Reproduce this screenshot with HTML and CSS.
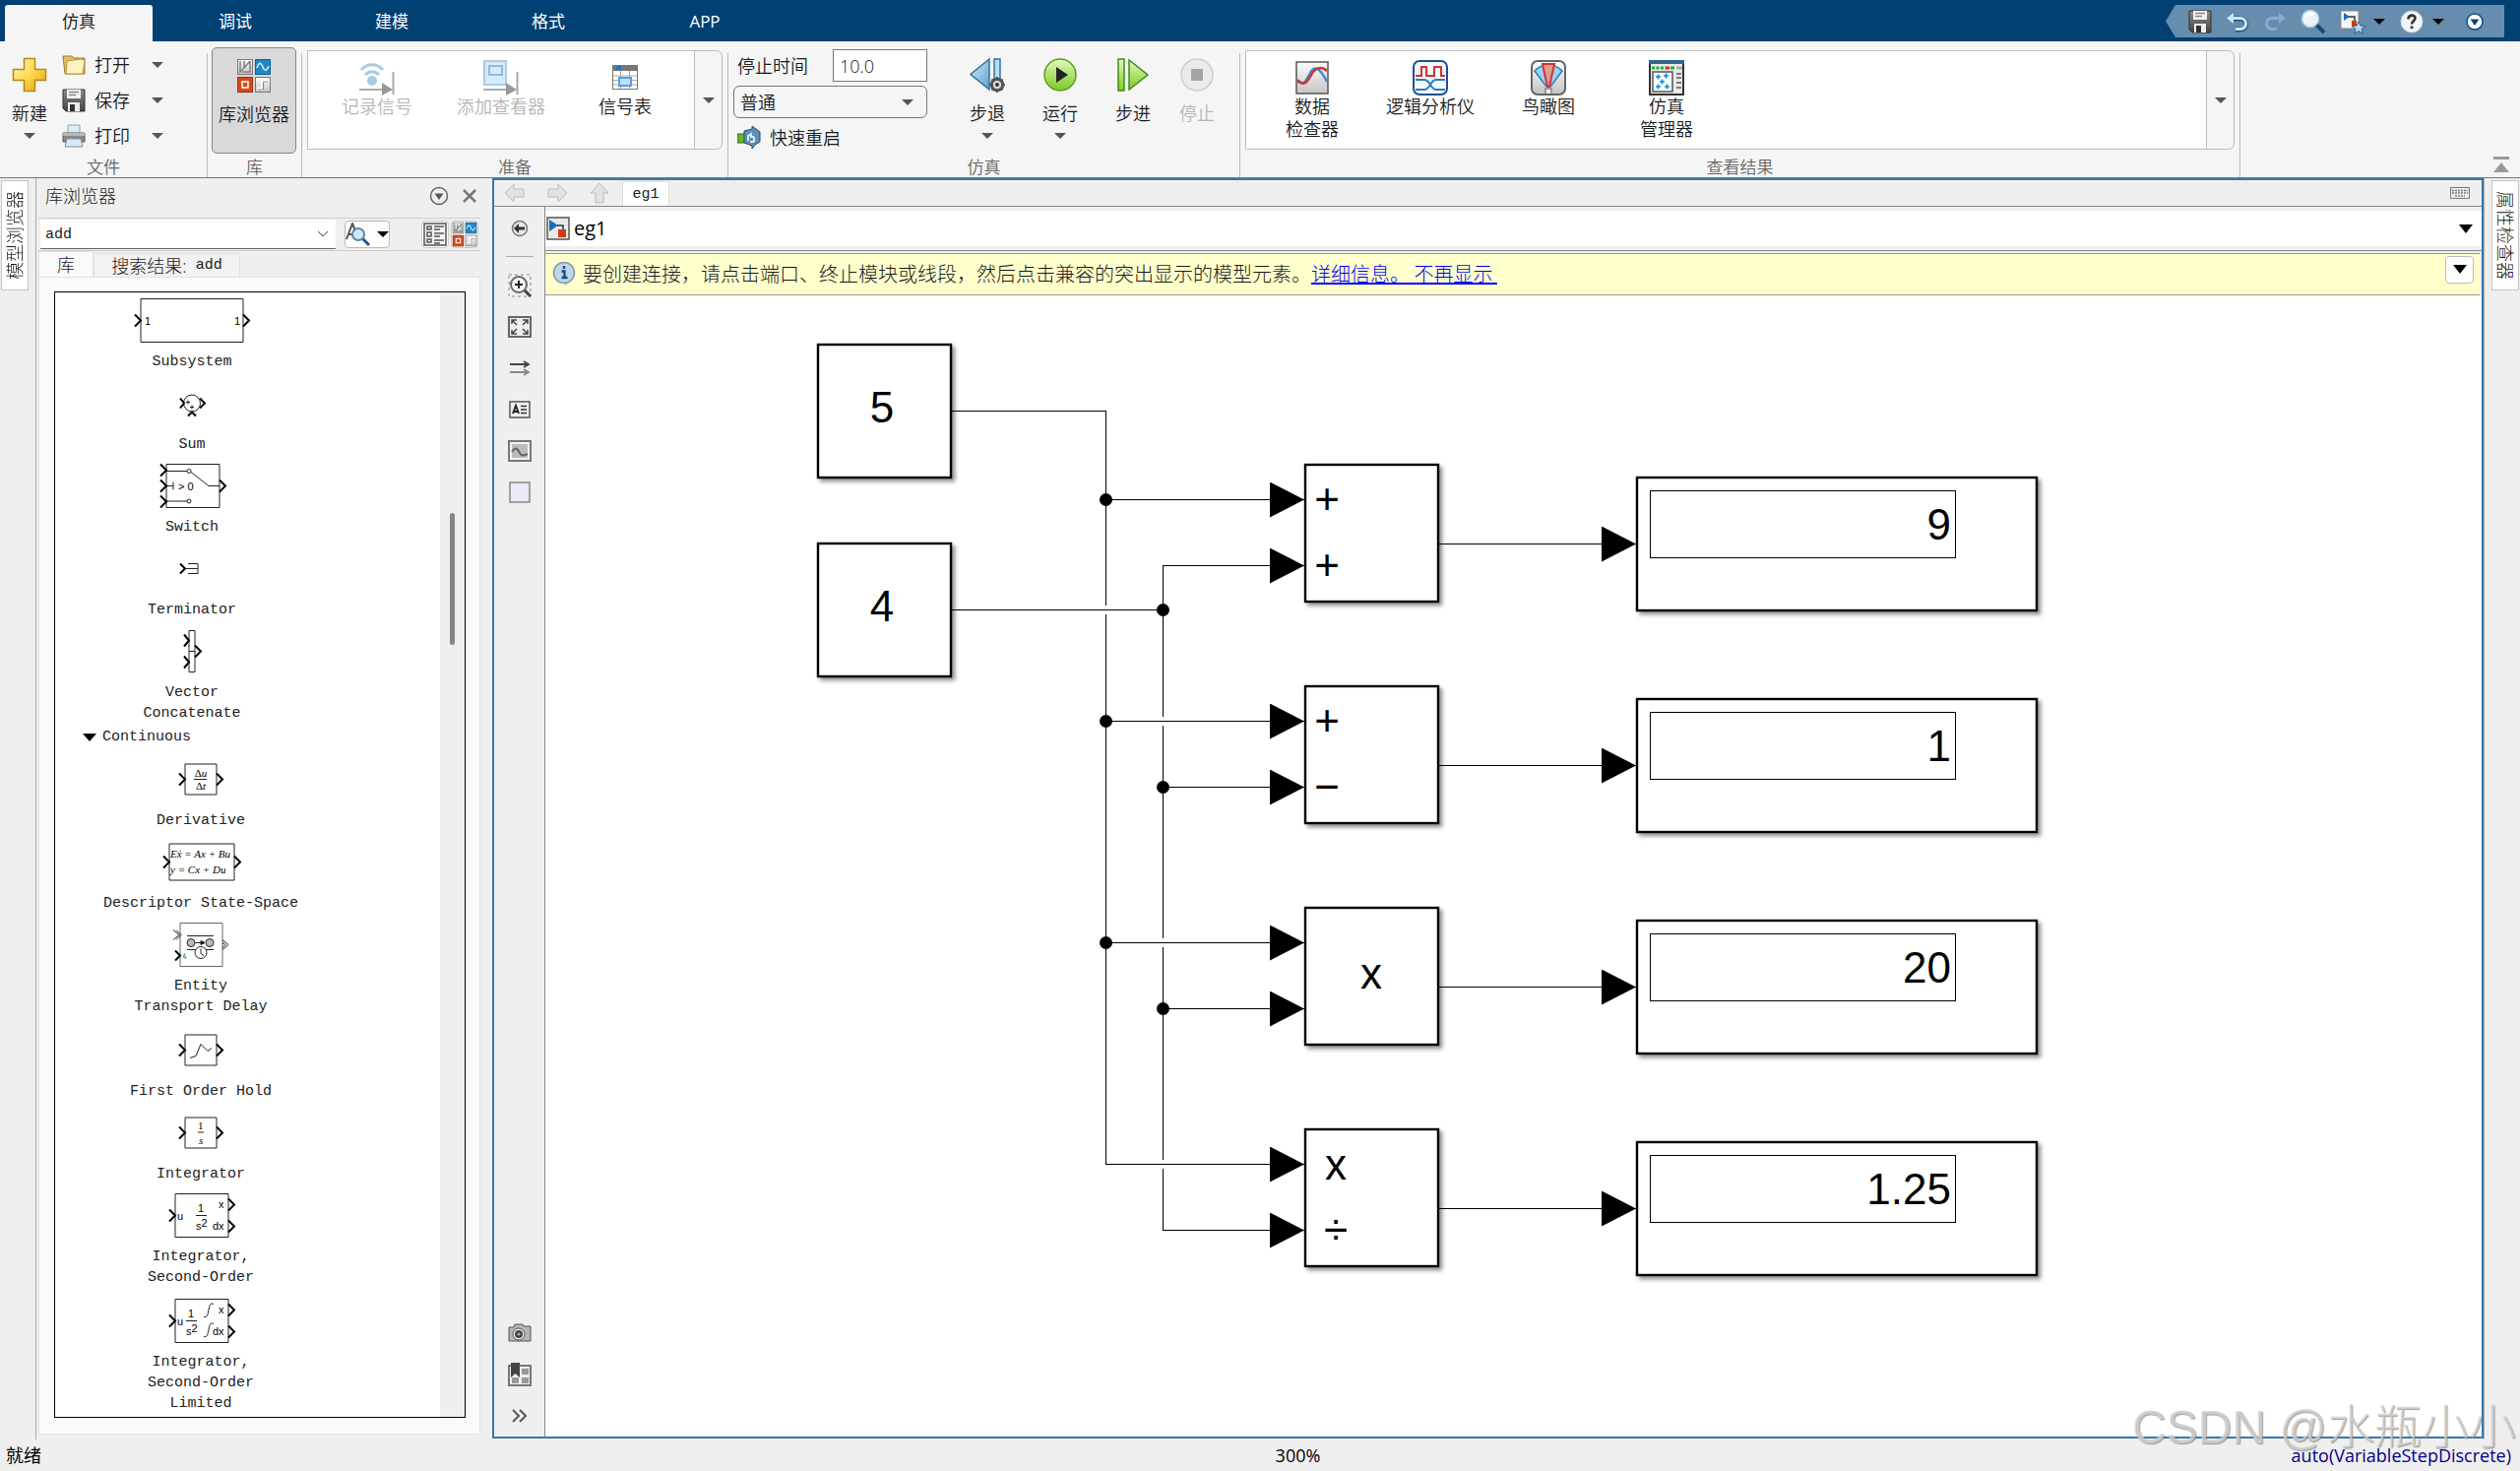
FILE: index.html
```html
<!DOCTYPE html>
<html lang="zh-CN">
<head>
<meta charset="utf-8">
<title>eg1 - Simulink</title>
<link rel="stylesheet" href="styles.css">
</head>
<body>
<svg class="defs" width="0" height="0" aria-hidden="true">
  <defs>
    <linearGradient id="gold" x1="0" y1="0" x2="1" y2="1"><stop offset="0" stop-color="#fff6c0"/><stop offset=".5" stop-color="#ffd84a"/><stop offset="1" stop-color="#d99e10"/></linearGradient>
    <linearGradient id="gray" x1="0" y1="0" x2="0" y2="1"><stop offset="0" stop-color="#fdfdfd"/><stop offset="1" stop-color="#c4c4c4"/></linearGradient>
    <linearGradient id="dark" x1="0" y1="0" x2="0" y2="1"><stop offset="0" stop-color="#8a8a8a"/><stop offset="1" stop-color="#444"/></linearGradient>
    <linearGradient id="green" x1="0" y1="0" x2="0" y2="1"><stop offset="0" stop-color="#e2f9bd"/><stop offset="1" stop-color="#7ccb22"/></linearGradient>
    <linearGradient id="blue" x1="0" y1="0" x2="1" y2="1"><stop offset="0" stop-color="#d5ebf8"/><stop offset="1" stop-color="#5b9fd0"/></linearGradient>
    <symbol id="floppy" viewBox="0 0 24 24"><path d="M1 1h22v22H4l-3-3z" fill="url(#dark)" stroke="#333"/><path d="M5 1h14v9H5z" fill="#f2f2f2"/><path d="M7 3.500h10M7 6.500h7" stroke="#888" stroke-width="1.500"/><path d="M6 14h12v9H6z" fill="#eee"/><path d="M8 16h5v7H8z" fill="#333"/></symbol>
    <symbol id="lib" viewBox="0 0 36 36"><g stroke="#777"><rect x="1.500" y="1.500" width="15" height="15" fill="url(#gray)"/><rect x="19.500" y="1.500" width="15" height="15" fill="#2187c4" stroke="#155f90"/><rect x="1.500" y="19.500" width="15" height="15" fill="#d8491b" stroke="#9a3010"/><rect x="19.500" y="19.500" width="15" height="15" fill="url(#gray)"/></g><path d="M4 3v11l4-4V3m0 7l6-7m0 0v11H6" fill="none" stroke="#808080" stroke-width="1.500"/><path d="M21 10c2-6 4-6 6-1s4 4 6-1" fill="none" stroke="#c4ecff" stroke-width="1.600"/><rect x="6" y="24" width="6" height="6" fill="none" stroke="#fff" stroke-width="1.500"/><path d="M21.500 31h5v-8h6" fill="none" stroke="#fff" stroke-width="3"/><path d="M22 32h5.500v-8h5" fill="none" stroke="#888"/></symbol>
  </defs>
</svg>

<header class="titlebar">
  <nav class="tabs">
    <button class="tab active">仿真</button><button class="tab">调试</button><button class="tab">建模</button><button class="tab">格式</button><button class="tab">APP</button>
  </nav>
  <div class="quick">
    <button aria-label="保存"><svg width="24" height="24"><use href="#floppy"/></svg></button>
    <button aria-label="撤销"><svg width="24" height="24" viewBox="0 0 24 24" fill="none"><path d="M5 9h10a5 5 0 0 1 0 11h-5" stroke="#1f5584" stroke-width="5"/><path d="M5 8.500h10a5 5 0 0 1 0 11h-5" stroke="#cfe6f7" stroke-width="3"/><path d="M1 8.500L8 3v11z" fill="#cfe6f7"/></svg></button>
    <button aria-label="重做"><svg width="24" height="24" viewBox="0 0 24 24" fill="none"><path d="M19 8.500H9a5 5 0 0 0 0 11h5" stroke="#87aecb" stroke-width="3"/><path d="M23 8.500L16 3v11z" fill="#87aecb"/></svg></button>
    <button aria-label="查找"><svg width="26" height="26" viewBox="0 0 26 26"><path d="M15 15l9 9" stroke="#164a7c" stroke-width="4"/><circle cx="10" cy="10" r="8.500" fill="#e8f3fb" stroke="#b7cfe0" stroke-width="1.500"/><path d="M5 9a5 5 0 0 1 8-3" stroke="#fff" stroke-width="3" fill="none"/></svg></button>
    <button class="with-arrow" aria-label="收藏"><svg width="26" height="26" viewBox="0 0 26 26"><path d="M1 2h18v18H1z" fill="#f6f6f6" stroke="#888"/><path d="M4 4l6 4-6 4z" fill="#1b6fb5"/><path d="M9 8h6v6" fill="none" stroke="#333" stroke-width="1.500"/><rect x="12" y="12" width="5" height="5" fill="#d03c12"/><path d="M19 13l2 4 5 .5-4 3 1.500 5-4.500-3-4.500 3 1.500-5-4-3 5-.5z" fill="#bcd6e8" stroke="#2c5f8c"/></svg><span class="tri black"></span></button>
    <button class="with-arrow" aria-label="帮助"><svg width="26" height="26" viewBox="0 0 26 26"><circle cx="13" cy="13" r="11" fill="#f3f5f7" stroke="#c8d2da"/><path d="M9.500 10.500c0-5 7-5 7-1 0 2.500-3.500 3-3.500 6" fill="none" stroke="#333" stroke-width="2.600"/><rect x="11.700" y="17.500" width="2.700" height="2.700" fill="#333"/></svg><span class="tri black"></span></button>
    <button class="last" aria-label="更多"><svg width="20" height="20" viewBox="0 0 20 20"><circle cx="10" cy="10" r="8" fill="#fff" stroke="#0c4a80" stroke-width="1.500"/><path d="M5.500 7.500h9L10 14z" fill="#0a4478"/></svg></button>
  </div>
</header>

<section class="ribbon">
  <div class="section">
    <div class="body file">
      <button class="tall new"><svg width="36" height="36" viewBox="0 0 36 36"><path d="M12.500 1.500h11v11h11v11h-11v11h-11v-11h-11v-11h11z" fill="url(#gold)" stroke="#b9861a" stroke-width="1.500"/></svg><span>新建</span><i class="tri"></i></button>
      <div class="rows">
        <button class="row"><svg width="24" height="24" viewBox="0 0 24 24"><path d="M1 3h9l2 2h11v16H3z" fill="#e2bf5e" stroke="#a07a20"/><path d="M5 8l14-2 4 1-2 14H4z" fill="#fff2c2" stroke="#b9953c"/></svg><span>打开</span><i class="tri"></i></button>
        <button class="row"><svg width="24" height="24"><use href="#floppy"/></svg><span>保存</span><i class="tri"></i></button>
        <button class="row"><svg width="24" height="24" viewBox="0 0 24 24"><path d="M6 1h12v9H6z" fill="#dcebf8" stroke="#8aa"/><path d="M1 9h22v9H1z" fill="#888" stroke="#555"/><path d="M1 9h22v3H1z" fill="#b8b8b8"/><path d="M5 15h14l2 8H3z" fill="#d6e8f7" stroke="#7794ac"/></svg><span>打印</span><i class="tri"></i></button>
      </div>
    </div>
    <div class="caption">文件</div>
  </div>
  <div class="sep"></div>
  <div class="section">
    <div class="body"><button class="tall pressed"><svg width="36" height="36"><use href="#lib"/></svg><span>库浏览器</span></button></div>
    <div class="caption">库</div>
  </div>
  <div class="sep"></div>
  <div class="section">
    <div class="gallery prep">
      <div class="items">
        <button class="item" disabled><svg width="36" height="36" viewBox="0 0 36 36" fill="none"><g stroke="#a9cbe4" stroke-width="3"><path d="M2 10a14 14 0 0 1 22 0M6 15a9 9 0 0 1 14 0"/></g><circle cx="13" cy="21" r="5" fill="#a9cbe4"/><path d="M0 30h26M34.500 12v23" stroke="#aaa" stroke-width="2"/><path d="M23 23l11 7-11 6z" fill="#999"/></svg><span>记录信号</span></button>
        <button class="item" disabled><svg width="36" height="36" viewBox="0 0 36 36" fill="none"><rect x="1" y="1" width="22" height="24" fill="#d8eaf8" stroke="#a9cbe4" stroke-width="2"/><rect x="6" y="6" width="13" height="9" stroke="#8fbce0" stroke-width="2"/><path d="M0 30h26M34.500 12v23" stroke="#aaa" stroke-width="2"/><path d="M23 23l11 7-11 6z" fill="#999"/></svg><span>添加查看器</span></button>
        <button class="item"><svg width="36" height="36" viewBox="0 0 36 36"><rect x="5.500" y="5.500" width="25" height="24" fill="#fff" stroke="#777"/><rect x="5" y="5" width="26" height="6" fill="#777"/><rect x="9" y="6" width="5" height="4" fill="#1775d0"/><path d="M6 16h24M6 20.500h24M6 25h24M13.500 11v18M22.500 11v18" stroke="#aaa"/><rect x="12" y="18" width="12" height="8" fill="#bfe0ff" stroke="#4f9fe8" stroke-width="2"/></svg><span>信号表</span></button>
      </div>
      <button class="more" aria-label="更多"><i class="tri"></i></button>
    </div>
    <div class="caption">准备</div>
  </div>
  <div class="sep"></div>
  <div class="section">
    <div class="body sim">
      <div class="form">
        <div class="field"><label for="stop">停止时间</label><input id="stop" value="10.0"></div>
        <div class="select"><select aria-label="仿真模式"><option>普通</option></select><i class="tri"></i></div>
        <button class="fast"><svg width="24" height="26" viewBox="0 0 24 26"><path d="M0 9h8v9H0z" fill="#63b82c" stroke="#2e6a12"/><path d="M7 6l8-2V1l8 6v10l-5 3-3 4v-3l-8-3z" fill="#5f8fb2" stroke="#234c6c"/><path d="M11 16v-5l3-2v3h3m0 5h-4m4 0v-5" fill="none" stroke="#d5ecfb" stroke-width="2"/></svg><span>快速重启</span></button>
      </div>
      <button class="tall run"><svg width="36" height="36" viewBox="0 0 36 36"><path d="M20 2v31L1 17.500z" fill="url(#blue)" stroke="#35719f" stroke-width="1.500"/><path d="M25 2h6v24h-6z" fill="#b6dcf5" stroke="#35719f" stroke-width="1.500"/><circle cx="28" cy="28" r="5.500" fill="none" stroke="#555" stroke-width="3.500"/><path d="M28 20v16M20 28h16M22.500 22.500l11 11M33.500 22.500l-11 11" stroke="#555" stroke-width="2"/><circle cx="28" cy="28" r="4" fill="#ddd"/><circle cx="28" cy="28" r="2" fill="#333"/></svg><span>步退</span><i class="tri"></i></button>
      <button class="tall run"><svg width="36" height="36" viewBox="0 0 36 36"><circle cx="18" cy="18" r="16" fill="url(#green)" stroke="#5e9b1d" stroke-width="1.500"/><path d="M14 10l12 8-12 8z" fill="#222"/></svg><span>运行</span><i class="tri"></i></button>
      <button class="tall run"><svg width="36" height="36" viewBox="0 0 36 36" fill="url(#green)" stroke="#3c8c1c" stroke-width="1.500"><path d="M3 2h6v32H3zM14 3v30l19-15z"/></svg><span>步进</span></button>
      <button class="tall stop" disabled><svg width="36" height="36" viewBox="0 0 36 36"><circle cx="18" cy="18" r="16" fill="#ebebeb" stroke="#ccc" stroke-width="1.500"/><rect x="12" y="12" width="12" height="12" fill="#a4a4a4"/></svg><span>停止</span></button>
    </div>
    <div class="caption">仿真</div>
  </div>
  <div class="sep"></div>
  <div class="section grow">
    <div class="gallery results">
      <div class="items">
        <button class="item"><svg width="36" height="36" viewBox="0 0 36 36" fill="none"><rect x="2" y="2" width="32" height="32" fill="url(#gray)" stroke="#555" stroke-width="1.500"/><path d="M3 20c7 8 9 0 13-7s9-7 17 9" stroke="#3d8fd1" stroke-width="2.500"/><path d="M3 21c9 8 12-4 16-9s10-5 14-1" stroke="#d1332e" stroke-width="2.500"/></svg><span>数据<br>检查器</span></button>
        <button class="item"><svg width="36" height="36" viewBox="0 0 36 36" fill="none"><rect x="1" y="1" width="34" height="34" rx="6" fill="#f4f8fc" stroke="#1f4f8c" stroke-width="2"/><path d="M3 16h6V7h5v9h8V7h7v9h4" stroke="#d8312b" stroke-width="2"/><path d="M3 20h9c6 0 6 10 12 10h9M3 30h9c6 0 6-10 12-10h9" stroke="#2b7cc1" stroke-width="2"/></svg><span>逻辑分析仪</span></button>
        <button class="item"><svg width="36" height="36" viewBox="0 0 36 36"><rect x="1" y="1" width="34" height="34" rx="6" fill="url(#gray)" stroke="#666" stroke-width="2"/><path d="M4 11Q18-2 32 11L20 27h-4z" fill="#9dd0f2" stroke="#2a80bd" stroke-width="1.500"/><path d="M12 4h12l-5 23h-2z" fill="#dd9d99" stroke="#d1332e" stroke-width="2"/><path d="M15 34v-5h6v5" fill="#eee" stroke="#888" stroke-width="1.500"/></svg><span>鸟瞰图</span></button>
        <button class="item"><svg width="36" height="36" viewBox="0 0 36 36"><rect x="1" y="1" width="34" height="34" fill="#e9e9e9" stroke="#333" stroke-width="2"/><rect x="0" y="0" width="36" height="4" fill="#34658f"/><path d="M3 8h15" stroke="#10b830" stroke-width="3" stroke-dasharray="3 1.500"/><path d="M17 8h4" stroke="#e03020" stroke-width="3"/><path d="M22 8h4" stroke="#10b830" stroke-width="3"/><path d="M28 8h6" stroke="#aaa" stroke-width="3"/><rect x="4" y="12" width="20" height="20" fill="#fff" stroke="#555" stroke-width="1.500"/><path d="M7 17h5m-2.500-2.500v5M15 16h5m-2.500-2.500v5M11 22h5m-2.500-2.500v5M7 27h5m-2.500-2.500v5M16 27h5m-2.500-2.500v5" stroke="#1a8bd4" stroke-width="1.700"/><path d="M28 14h5M28 18h5M28 23h5M28 28h5" stroke="#555" stroke-width="1.500"/></svg><span>仿真<br>管理器</span></button>
      </div>
      <button class="more" aria-label="更多"><i class="tri"></i></button>
    </div>
    <div class="caption">查看结果</div>
  </div>
  <div class="sep"></div>
  <div class="ribbon-end"><button aria-label="折叠"><svg width="16" height="18" viewBox="0 0 16 18" fill="#999"><path d="M0 1h16v3H0zM8 7l8 10H0z"/></svg></button></div>
</section>

<main class="workspace">
  <aside class="strip left"><button class="side-tab">模型浏览器</button></aside>

  <section class="library">
    <div class="lib-head"><h2>库浏览器</h2>
      <button aria-label="选项"><svg width="20" height="20" viewBox="0 0 20 20"><circle cx="10" cy="10" r="8.500" fill="none" stroke="#666" stroke-width="1.500"/><path d="M5.500 7.500h9L10 14z" fill="#555"/></svg></button>
      <button aria-label="关闭"><svg width="14" height="14" viewBox="0 0 14 14"><path d="M1 1l12 12M13 1L1 13" stroke="#777" stroke-width="2.500"/></svg></button>
    </div>
    <div class="lib-search">
      <div class="combo"><input aria-label="搜索" value="add"><svg width="12" height="8" viewBox="0 0 12 8"><path d="M1 1l5 5 5-5" fill="none" stroke="#444"/></svg></div>
      <button class="search-btn" aria-label="搜索"><svg width="26" height="24" viewBox="0 0 26 24" fill="none"><path d="M1 17L7 1l5 12M3 12h8" stroke="#555" stroke-width="2"/><path d="M17 16l7 7" stroke="#225a92" stroke-width="3"/><circle cx="13" cy="12" r="6" fill="#d3e8f7" stroke="#5f87a8" stroke-width="2"/></svg><span class="tri black"></span></button>
      <button class="icon-btn" aria-label="列表"><svg width="24" height="24" viewBox="0 0 24 24" fill="none" stroke="#555" stroke-width="1.500"><path d="M1 1h22v22H1z" fill="#f4f4f4"/><path d="M4 4h4v3H4zM4 10h4v4H4zM4 17h4v3H4zM11 4h10M11 7h6M11 11h10M11 14h6M11 18h10M11 21h6"/></svg></button>
      <button class="icon-btn" aria-label="图标"><svg width="26" height="26"><use href="#lib"/></svg></button>
    </div>
    <div class="lib-tabs"><button class="on">库</button><button>搜索结果: <span class="mono">add</span></button></div>
    <div class="lib-page">
      <div class="lib-box">
        <div class="lib-list">
          <ul class="group">
            <li><svg viewBox="-60 -30 120 60"><path d="M-52-22H52V22H-52z"/><path class="port" d="M-58-6l6 6-6 6M52-6l6 6-6 6"/><text x="-48" y="4">1</text><text x="43" y="4">1</text></svg><span>Subsystem</span></li>
            <li><svg viewBox="-60 -30 120 60"><circle r="8.500"/><path class="port" d="M-12-5l4 5-4 5M8-5l5 5-5 5M-4 13l4-4 4 4"/><path d="M-6-1h4m-2-2v4M-2 4h4m-2-2v4"/></svg><span>Sum</span></li>
            <li><svg viewBox="-60 -30 120 60"><path d="M-26-22H28V22H-26zM-26-15h21M-1-14l18 14h11M-26 0h7m0-4v8M-26 15.500h21"/><circle cx="-3" cy="-15" r="2"/><circle cx="-3" cy="15.500" r="2"/><path class="port" d="M-32-22l6 6-6 6M-32-6l6 6-6 6M-32 10l6 6-6 6M28-6l6 6-6 6"/><text x="-14" y="4">&gt; 0</text></svg><span>Switch</span></li>
            <li><svg viewBox="-60 -30 120 60"><path class="port" d="M-12-5l5 5-5 5"/><path d="M-7 0H6M-4-5H6V5H-4"/></svg><span>Terminator</span></li>
            <li><svg viewBox="-60 -30 120 60"><path d="M-3-21h6v42h-6zM-3 0h6"/><path class="port" d="M-8-17l5 6-5 6M-8 5l5 6-5 6M3-6l6 6-6 6"/></svg><span>Vector<br>Concatenate</span></li>
          </ul>
          <h3><i class="tri black"></i>Continuous</h3>
          <ul class="group nested">
            <li><svg viewBox="-60 -30 120 60"><path d="M-16-15.500h32v31h-32zM-7 0H6"/><path class="port" d="M-22-6l6 6-6 6M16-6l6 6-6 6"/><text class="serif" x="0" y="-3" text-anchor="middle">Δ<tspan font-style="italic">u</tspan></text><text class="serif" x="0" y="10" text-anchor="middle">Δ<tspan font-style="italic">t</tspan></text></svg><span>Derivative</span></li>
            <li><svg viewBox="-60 -30 120 60"><path d="M-32-18.500h66v37h-66z"/><path class="port" d="M-38-6l6 6-6 6M34-6l6 6-6 6"/><text class="serif it" x="-31" y="-5">Eẋ = Ax + Bu</text><text class="serif it" x="-31" y="11">y = Cx + Du</text></svg><span>Descriptor State-Space</span></li>
            <li><svg viewBox="-60 -30 120 60"><path stroke="#666" d="M-21-22h43v44h-43z"/><path d="M-14-9h27M-14 5h27M-6-2H3"/><path d="M0-4l4 2-4 2z" fill="#000"/><g class="gray"><circle cx="-10" cy="-2" r="4"/><circle cx="9" cy="-2" r="4"/></g><circle class="white" cy="8" r="6"/><path d="M0 4v5l3 2"/><path d="M-28-15l6 5-6 5M-25-15l5 5-5 5M22-5l6 5-6 5M22-2l3 2-3 3"/><path class="port" d="M-26 6l5 5-5 5"/><text class="serif it tiny" x="-18" y="13">tᵢ</text></svg><span>Entity<br>Transport Delay</span></li>
            <li><svg viewBox="-60 -30 120 60"><path d="M-16-15.500h32v31h-32zM-11 8l6-2 5-12 7 7 4-3"/><path class="port" d="M-22-6l6 6-6 6M16-6l6 6-6 6"/></svg><span>First Order Hold</span></li>
            <li><svg viewBox="-60 -30 120 60"><path d="M-16-15.500h32v31h-32zM-3-.5h6"/><path class="port" d="M-22-6l6 6-6 6M16-6l6 6-6 6"/><text class="serif" x="-3" y="-4">1</text><text class="serif it" x="-2" y="11">s</text></svg><span>Integrator</span></li>
            <li><svg viewBox="-60 -30 120 60"><path d="M-26-22h54v44h-54zM-5 0H6"/><path class="port" d="M-32-6l6 6-6 6M28-17l6 6-6 6M28 5l6 6-6 6"/><text x="-24" y="4">u</text><text x="-3" y="-4">1</text><text x="-5" y="14">s<tspan dy="-3">2</tspan></text><text x="18" y="-8">x</text><text x="12" y="14">dx</text></svg><span>Integrator,<br>Second-Order</span></li>
            <li><svg viewBox="-60 -30 120 60"><path d="M-26-22h54v44h-54zM-15 0H-4"/><path class="port" d="M-32-6l6 6-6 6M28-17l6 6-6 6M28 5l6 6-6 6"/><path d="M13-17c-4-2-4 2-5 6s-1 8-5 7M13 3c-4-2-4 2-5 6s-1 8-5 7"/><text x="-24" y="4">u</text><text x="-13" y="-4">1</text><text x="-15" y="14">s<tspan dy="-3">2</tspan></text><text x="18" y="-8">x</text><text x="12" y="14">dx</text></svg><span>Integrator,<br>Second-Order<br>Limited</span></li>
          </ul>
        </div>
        <div class="scroll"><div class="thumb"></div></div>
      </div>
    </div>
  </section>

  <section class="editor">
    <div class="doc-bar">
      <div class="nav">
        <svg width="24" height="24" viewBox="0 0 24 24"><path d="M2 12l9-9v5h10v8H11v5z"/></svg>
        <svg width="24" height="24" viewBox="0 0 24 24"><path d="M22 12l-9-9v5H3v8h10v5z"/></svg>
        <svg width="24" height="24" viewBox="0 0 24 24"><path d="M12 2l9 10h-5v10H8V12H3z"/></svg>
      </div>
      <button class="doc-tab mono">eg1</button>
      <svg class="kbd" width="20" height="12" viewBox="0 0 20 12"><path d="M.5.500h19v11H.5z" fill="#eee" stroke="#777"/><path d="M2 3.500h16M2 6h16M5 9h10" stroke="#777" stroke-width="1.500" stroke-dasharray="2 1"/></svg>
    </div>
    <div class="editor-main">
      <div class="palette">
        <button aria-label="隐藏"><svg width="20" height="20" viewBox="0 0 20 20"><circle cx="10" cy="10" r="7.500" fill="#e8e8e8" stroke="#777" stroke-width="1.500"/><path d="M4 10l5-5v3.500h6v3H9V15z" fill="#333"/></svg></button>
        <hr>
        <button aria-label="缩放"><svg width="26" height="26" viewBox="0 0 26 26" fill="none"><path d="M2 2h22v22H2z" stroke="#888" stroke-dasharray="3 3"/><path d="M17 17l7 7" stroke="#444" stroke-width="3"/><circle cx="12" cy="12" r="8" fill="#f8f8f8" stroke="#666" stroke-width="2"/><path d="M8 12h8M12 8v8" stroke="#222" stroke-width="2"/></svg></button>
        <button aria-label="适应视图"><svg width="24" height="24" viewBox="0 0 24 24" fill="none" stroke="#444" stroke-width="1.500"><path d="M1 2h22v20H1z" fill="#eee" stroke="#666" stroke-width="2"/><path d="M4 9V5h5M4 5l5 5M20 9V5h-5M20 5l-5 5M4 15v4h5M4 19l5-5M20 15v4h-5M20 19l-5-5"/></svg></button>
        <button aria-label="信号"><svg width="22" height="20" viewBox="0 0 22 20" fill="none" stroke-width="1.800"><path d="M1 6h19M15 3l5 3-5 3" stroke="#444"/><path d="M1 14h19M15 11l5 3-5 3" stroke="#888"/></svg></button>
        <button aria-label="注释"><svg width="22" height="20" viewBox="0 0 22 20" fill="none"><path d="M1 2h20v16H1z" fill="#f0f0f0" stroke="#555" stroke-width="1.500"/><path d="M4 14L7 6l3 8M5 12h4" stroke="#222" stroke-width="2"/><path d="M12 6.500h6M12 10h6M12 13.500h6" stroke="#333" stroke-width="1.500"/></svg></button>
        <button aria-label="图像"><svg width="24" height="22" viewBox="0 0 24 22" fill="none"><path d="M1 1h22v20H1z" fill="#f2f2f2" stroke="#777" stroke-width="2"/><path d="M4 4h16v14H4z" fill="#bcbcbc"/><path d="M4 12c4-6 6-3 8 1s5 2 8 1" stroke="#666" stroke-width="2"/></svg></button>
        <button aria-label="区域"><svg width="22" height="22" viewBox="0 0 22 22"><path d="M1 1h20v20H1z" fill="#e9e9f8" stroke="#888" stroke-width="1.500"/></svg></button>
        <span class="push"></span>
        <button aria-label="截图"><svg width="24" height="20" viewBox="0 0 24 20"><path d="M1 4h5l1-3h8l1 2h7v15H1z" fill="#b5b5b5" stroke="#555"/><circle cx="11" cy="11" r="6" fill="#eee" stroke="#555"/><circle cx="11" cy="11" r="4" fill="#444"/><circle cx="11" cy="11" r="1.500" fill="#aaa"/></svg></button>
        <button aria-label="书签"><svg width="24" height="24" viewBox="0 0 24 24"><path d="M1 3h22v20H1z" fill="#eee" stroke="#777" stroke-width="2"/><path d="M14 6h7v6h-7zM14 15h7v6h-7zM4 15h7v6H4z" fill="#999"/><path d="M3 0h9v15l-4.500-4L3 15z" fill="#444"/></svg></button>
        <button aria-label="展开"><svg width="18" height="16" viewBox="0 0 18 16" fill="none" stroke="#555" stroke-width="2"><path d="M2 2l6 6-6 6M9 2l6 6-6 6"/></svg></button>
      </div>
      <div class="model">
        <div class="crumb"><svg width="24" height="24" viewBox="0 0 24 24"><path d="M1 1h22v22H1z" fill="#e9e9e9" stroke="#555" stroke-width="1.500"/><path d="M3 3l9 6-9 6z" fill="#1b6fb5"/><path d="M11 9h6v6" fill="none" stroke="#333" stroke-width="1.500"/><rect x="12" y="13" width="8" height="8" fill="#d03c12"/></svg><span>eg1</span><i class="tri black big"></i></div>
        <div class="notice">
          <svg width="26" height="24" viewBox="0 0 26 24"><path d="M9 18h9l-3 6z" fill="#a9b9c8"/><circle cx="13" cy="11" r="10.500" fill="#bcd6ea" stroke="#8797a5" stroke-width="1.500"/><path d="M13 4v3M10.500 9.500h3V16m-3 0h6" stroke="#174f86" stroke-width="2.400" fill="none"/></svg>
          <p>要创建连接，请点击端口、终止模块或线段，然后点击兼容的突出显示的模型元素。<a href="#">详细信息。&nbsp;不再显示&nbsp;</a></p>
          <button aria-label="更多"><i class="tri black big"></i></button>
        </div>
        <div class="canvas">
          <svg class="diagram" width="1600" height="1100" viewBox="554 300 1600 1100">
            <defs>
              <marker id="arrow" markerWidth="35" markerHeight="36" refX="35" refY="18" orient="auto" markerUnits="userSpaceOnUse"><path d="M0 0L35 18L0 36z"/></marker>
              <g id="display"><rect class="block" x="1663" y="485" width="406" height="135"/><rect class="inner" x="1676.500" y="498.500" width="310" height="68"/></g>
              <rect id="op" class="block" x="1326" y="472" width="135" height="139"/>
            </defs>
            <g class="wire">
              <path d="M1123.500 417.500V1182.500M1181.500 574.500V1249.500"/>
              <path class="gap" d="M1123.500 615v9M1181.500 728v9M1181.500 953v9M1181.500 1178v9"/>
              <path d="M967 417.500h157M967 619.500h215"/>
              <path marker-end="url(#arrow)" d="M1124 507.500H1325"/><path marker-end="url(#arrow)" d="M1181 574.500H1325"/>
              <path marker-end="url(#arrow)" d="M1124 732.500H1325"/><path marker-end="url(#arrow)" d="M1181 799.500H1325"/>
              <path marker-end="url(#arrow)" d="M1124 957.500H1325"/><path marker-end="url(#arrow)" d="M1181 1024.500H1325"/>
              <path marker-end="url(#arrow)" d="M1123 1182.500H1325"/><path marker-end="url(#arrow)" d="M1181 1249.500H1325"/>
              <path marker-end="url(#arrow)" d="M1462 552.500H1662"/><path marker-end="url(#arrow)" d="M1462 777.500H1662"/>
              <path marker-end="url(#arrow)" d="M1462 1002.500H1662"/><path marker-end="url(#arrow)" d="M1462 1227.500H1662"/>
            </g>
            <circle cx="1123.500" cy="507.500" r="6.500"/><circle cx="1123.500" cy="732.500" r="6.500"/><circle cx="1123.500" cy="957.500" r="6.500"/>
            <circle cx="1181.500" cy="619.500" r="6.500"/><circle cx="1181.500" cy="799.500" r="6.500"/><circle cx="1181.500" cy="1024.500" r="6.500"/>
            <rect class="block" x="831" y="350" width="135" height="135"/><rect class="block" x="831" y="552" width="135" height="135"/>
            <use href="#op"/><use href="#op" y="225"/><use href="#op" y="450"/><use href="#op" y="675"/>
            <use href="#display"/><use href="#display" y="225"/><use href="#display" y="450"/><use href="#display" y="675"/>
            <g class="mid"><text x="896" y="429">5</text><text x="896" y="631">4</text>
              <text x="1348" y="522">+</text><text x="1348" y="589">+</text><text x="1348" y="747">+</text><text x="1348" y="814">−</text>
              <text x="1393" y="1004">x</text><text x="1357" y="1198">x</text><text x="1357" y="1264">÷</text></g>
            <g class="end"><text x="1982" y="548">9</text><text x="1982" y="773">1</text><text x="1982" y="998">20</text><text x="1982" y="1223">1.25</text></g>
          </svg>
        </div>
      </div>
    </div>
  </section>

  <aside class="strip right"><button class="side-tab">属性检查器</button></aside>
</main>

<footer class="status"><span>就绪</span><span class="zoom">300%</span><a href="#">auto(VariableStepDiscrete)</a></footer>
<div class="watermark">CSDN @水瓶小小</div>
</body>
</html>
```
FILE: styles.css
```css
* { box-sizing: border-box; }
body {
  margin: 0;
  height: 100vh;
  display: flex;
  flex-direction: column;
  position: relative;
  overflow: hidden;
  background: #efefef;
  color: #1a1a1a;
  font: 18px/24px "Open Sans", "Noto Sans CJK SC", sans-serif;
}
button, input, select { font: inherit; color: inherit; }
button { background: none; border: 0; padding: 0; display: flex; align-items: center; }
button:disabled { color: #b5b5b5; }
svg { flex: none; display: block; }
.defs { position: absolute; }
.mono { font-family: "Liberation Mono", "Noto Sans CJK SC", monospace; font-size: 15px; }
.tri { flex: none; border: solid transparent; border-width: 6px 6px 0; border-top-color: #555; width: 0; height: 0; }
.tri.black { border-top-color: #000; }
.tri.big { border-width: 9px 7px 0; }

/* title bar */
.titlebar { display: flex; justify-content: space-between; height: 42px; background: #004073; padding: 5px 16px 0 5px; }
.tabs { display: flex; gap: 9px; }
.tab { width: 150px; padding-bottom: 3px; justify-content: center; color: #fff; font-size: 17px; }
.tab.active { background: #f5f5f5; color: #222; border-radius: 3px 3px 0 0; }
.quick { display: flex; align-items: center; gap: 14px; height: 33px; padding: 0 20px 0 23px; background: #668dad; clip-path: polygon(10px 0, 100% 0, 100% 100%, 10px 100%, 0 50%); }
.with-arrow { gap: 8px; }
.quick .last { margin-left: 7px; }

/* ribbon */
.ribbon { display: flex; height: 139px; background: #f5f5f5; border-bottom: 1px solid #777; font-weight: 350; }
.section { display: flex; flex-direction: column; }
.grow { flex: 1; }
.sep { width: 1px; margin-top: 12px; background: #bbb; }
.body { display: flex; flex: 1; padding-top: 6px; }
.caption { text-align: center; font-size: 17px; line-height: 20px; color: #666; }
.tall { flex-direction: column; height: 108px; padding-top: 10px; }
.tall span { margin: 9px 0 8px; }
.new { width: 60px; }
.rows { width: 150px; }
.row { height: 36px; padding-left: 3px; }
.row span { margin: 0 22px 0 9px; }
.pressed { width: 86px; margin: 0 5px 0 4px; background: #d9d9d9; border: 1px solid #888; border-radius: 5px; }
.gallery { display: flex; height: 101px; margin: 9px 5px 8px; border: 1px solid #bbb; border-radius: 0 6px 6px 0; }
.items { display: flex; flex: 1; background: #fff; border-right: 1px solid #bbb; }
.prep .items { padding: 0 7px; }
.results .items { padding-left: 7px; }
.item { flex-direction: column; width: 126px; padding-top: 9px; line-height: 23px; white-space: nowrap; }
.results .item { width: 120px; }
.more { width: 27px; justify-content: center; }
.sim { padding-right: 15px; }
.form { display: flex; flex-direction: column; gap: 4px; width: 202px; margin: 2px 24px 0 0; padding-left: 5px; }
.field { display: flex; align-items: center; justify-content: space-between; padding-left: 4px; }
.field input { width: 96px; height: 33px; border: 1px solid #777; padding: 0 6px; background: #fff; }
.select { display: flex; align-items: center; height: 33px; border: 1px solid #777; border-radius: 6px; padding: 0 13px 0 6px; }
.select select { flex: 1; appearance: none; border: 0; background: none; padding: 0; }
.fast { height: 31px; padding-left: 4px; gap: 9px; }
.run { width: 74px; }
.stop { width: 56px; }
.ribbon-end { display: flex; width: 284px; justify-content: flex-end; align-items: flex-end; padding: 0 11px 4px 0; }

/* workspace */
.workspace { display: flex; flex: 1; min-height: 0; }
.strip { width: 37px; padding-top: 2px; }
.strip.left { border-right: 1px solid #aaa; padding-left: 1px; }
.strip.right { padding-left: 7px; border-left: 1px solid #aaa; }
.side-tab { width: 28px; height: 112px; justify-content: center; background: #fff; border: 1px solid #c4c4c4; writing-mode: vertical-rl; text-orientation: sideways; font-weight: 300; }
.left .side-tab { transform: rotate(180deg); }

.library { display: flex; flex-direction: column; width: 463px; padding: 0 12px 5px 2px; font-weight: 300; }
.lib-head { display: flex; align-items: center; gap: 14px; height: 40px; padding: 0 4px 4px 7px; }
.lib-head h2 { flex: 1; margin: 0; font: inherit; }
.lib-search { display: flex; align-items: center; height: 34px; padding: 0 2px; border: solid #ccc; border-width: 1px 0; }
.combo { flex: 1; display: flex; align-items: center; height: 30px; padding: 0 7px 0 5px; background: #fff; border-bottom: 1px solid #666; }
.combo input { flex: 1; min-width: 0; border: 0; padding: 2px 0 0; background: none; font: 15px/24px "Liberation Mono", monospace; }
.search-btn { width: 46px; height: 28px; margin: 0 30px 0 9px; gap: 6px; background: #fdfdfd; border: 1px solid #bbb; border-radius: 4px; }
.icon-btn { width: 28px; height: 28px; justify-content: center; margin-left: 2px; background: #fdfdfd; border: 1px solid #ccc; border-radius: 4px; }
.lib-tabs { display: flex; align-items: flex-end; height: 26px; }
.lib-tabs button { justify-content: center; gap: 9px; width: 149px; height: 24px; background: #f2f2f2; border: 1px solid #e2e2e2; border-bottom: 0; }
.lib-tabs .on { width: 56px; height: 26px; background: #fafafa; }
.lib-page { flex: 1; min-height: 0; display: flex; padding: 14px 14px 16px 15px; background: #fafafa; border: 1px solid #e2e2e2; }
.lib-box { flex: 1; display: flex; background: #fff; border: 1px solid #000; overflow: hidden; }
.lib-list { flex: 1; margin-top: -3px; font: 15px/21px "Liberation Mono", monospace; color: #222; }
.group { list-style: none; width: 278px; margin: 0; padding: 0; }
.group.nested { width: 296px; }
.group li { display: flex; flex-direction: column; align-items: center; text-align: center; white-space: nowrap; }
.group li:has(br) { padding-bottom: 2px; }
.group svg { width: 120px; height: 63px; fill: none; stroke: #222; stroke-width: 1px; }
.group .port { stroke: #000; stroke-width: 2px; }
.group text { fill: #000; stroke: none; font: 11px "Liberation Sans", sans-serif; }
.group .serif { font: 11px "Liberation Serif", serif; }
.group .it { font-style: italic; }
.group .tiny { font-size: 8px; }
.gray { fill: #bbb; }
.white { fill: #fff; }
.lib-list h3 { display: flex; align-items: center; gap: 6px; height: 23px; margin: 0; padding-left: 28px; font: inherit; }
.lib-list h3 .tri { border-width: 8px 7px 0; }
.scroll { width: 25px; padding: 224px 0 0 10px; background: #efefef; }
.thumb { width: 5px; height: 134px; border-radius: 3px; background: #858585; }

/* editor */
.editor { flex: 1; min-width: 0; display: flex; flex-direction: column; border: 2px solid #3578ae; margin-bottom: 1px; }
.doc-bar { display: flex; align-items: center; height: 27px; padding-right: 12px; border-bottom: 1px solid #888; }
.nav { display: flex; gap: 19px; padding: 0 11px 0 9px; fill: #e2e2e2; stroke: #bbb; }
.doc-tab { align-self: flex-end; height: 25px; width: 48px; padding-top: 2px; justify-content: center; background: #fff; border: 1px solid #ddd; border-bottom: 0; }
.kbd { margin-left: auto; }
.editor-main { flex: 1; min-height: 0; display: flex; }
.palette { width: 51px; display: flex; flex-direction: column; align-items: center; padding-top: 10px; }
.palette button { width: 42px; height: 42px; justify-content: center; }
.palette button:first-child { height: 24px; }
.palette hr { width: 28px; margin: 16px 0 8px; border: 0; border-top: 1px solid #aaa; }
.push { flex: 1; }
.model { flex: 1; min-width: 0; display: flex; flex-direction: column; border-left: 1px solid #888; }
.crumb { display: flex; align-items: center; gap: 4px; height: 44px; padding: 0 9px 0 1px; background: #fff; border: solid #efefef; border-width: 4px 0; box-shadow: 0 1px #888; font-size: 20px; color: #000; }
.crumb .tri { margin-left: auto; }
.notice { display: flex; align-items: center; height: 43px; margin: 3px 2px 0 0; padding: 0 6px 2px; background: #ffc; border: solid #999; border-width: 1px 0; }
.notice p { flex: 1; margin: 0 0 0 6px; font: 300 20px/24px "Noto Sans CJK SC", sans-serif; white-space: nowrap; }
.notice a { color: #00f; }
.notice button { width: 29px; height: 28px; margin-bottom: 8px; justify-content: center; background: #fdfdfd; border: 1px solid #bbb; border-radius: 4px; }
.canvas { flex: 1; min-height: 0; overflow: hidden; background: #fff; }
.wire { fill: none; stroke: #000; stroke-width: 1px; }
.wire .gap { stroke: #fff; stroke-width: 3px; }
.diagram marker path { fill: #000; stroke: none; }
.block { fill: #fff; stroke: #000; stroke-width: 2.4px; filter: drop-shadow(3px 3px 2px rgba(0, 0, 0, .45)); }
.inner { fill: #fff; stroke: #000; }
.diagram text { font: 44px "Liberation Sans", sans-serif; fill: #000; }
.mid { text-anchor: middle; }
.end { text-anchor: end; }

/* status bar */
.status { display: grid; grid-template-columns: 1fr auto 1fr; align-items: center; height: 32px; padding: 0 9px 0 6px; color: #000; }
.status .zoom { padding-left: 80px; }
.status a { justify-self: end; color: #00008b; text-decoration: none; }
.watermark { position: absolute; right: 4px; bottom: 12px; font: 300 48px/64px "Liberation Sans", "Noto Sans CJK SC", sans-serif; color: rgba(215, 215, 215, .75); text-shadow: 1px 1px 1px rgba(120, 120, 120, .7); pointer-events: none; }
```
